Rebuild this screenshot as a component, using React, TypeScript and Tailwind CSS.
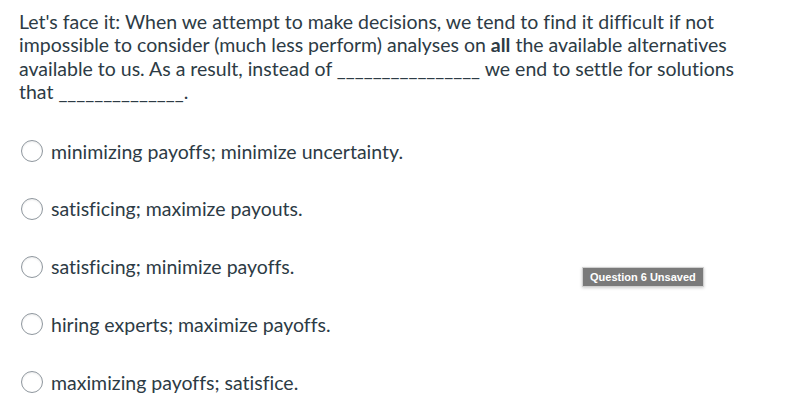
export default function App() {
  const options = [
    "minimizing payoffs; minimize uncertainty.",
    "satisficing; maximize payouts.",
    "satisficing; minimize payoffs.",
    "hiring experts; maximize payoffs.",
    "maximizing payoffs; satisfice.",
  ];

  return (
    <div className="w-[786px] h-[412px] bg-white overflow-hidden relative text-[#2d3b45] font-['Lato','Noto_Sans',sans-serif] [font-variant-ligatures:none]">
      <div className="pl-[19px] pt-[10px] pr-4">
        <p className="text-[19.5px] leading-[23.3px] whitespace-nowrap">
          Let's face it: When we attempt to make decisions, we tend to find it difficult if not
          <br />
          impossible to consider (much less perform) analyses on <strong>all</strong> the available alternatives
          <br />
          available to us. As a result, instead of ________________ we end to settle for solutions
          <br />
          that ______________.
        </p>
      </div>
      <div className="flex flex-col gap-[33.75px] mt-[36px] pl-[21px]">
        {options.map((o) => (
          <label key={o} className="flex items-center gap-[8px] h-[24px]">
            <span className="w-[22px] h-[22px] shrink-0 rounded-full border border-[#8f979e] bg-white shadow-[inset_0_1px_2px_rgba(0,0,0,0.08)]" />
            <span className="text-[19.5px] leading-[23px] whitespace-nowrap">{o}</span>
          </label>
        ))}
      </div>
      <div className="absolute left-[582px] top-[267px] bg-[#7a7a7a] border border-[#d0d0d0] px-[7px] py-[2px] text-white text-[11px] font-bold leading-[14px] font-['Liberation_Sans',sans-serif] shadow-[0_1px_3px_rgba(0,0,0,0.2)]">
        Question 6 Unsaved
      </div>
    </div>
  );
}
